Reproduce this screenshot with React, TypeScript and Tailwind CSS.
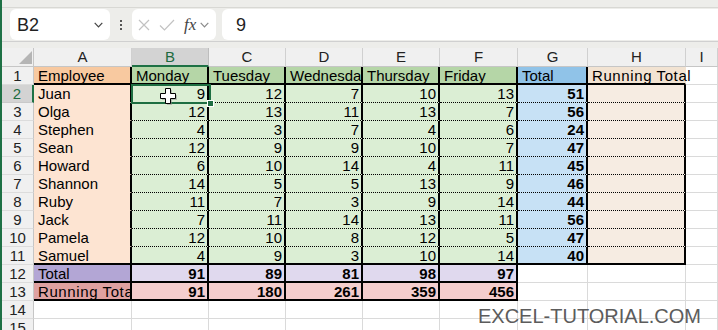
import React from "react";

const names = ["Juan", "Olga", "Stephen", "Sean", "Howard", "Shannon", "Ruby", "Jack", "Pamela", "Samuel"];
const data = [
  [9, 12, 7, 10, 13],
  [12, 13, 11, 13, 7],
  [4, 3, 7, 4, 6],
  [12, 9, 9, 10, 7],
  [6, 10, 14, 4, 11],
  [14, 5, 5, 13, 9],
  [11, 7, 3, 9, 14],
  [7, 11, 14, 13, 11],
  [12, 10, 8, 12, 5],
  [4, 9, 3, 10, 14],
];
const totals = [91, 89, 81, 98, 97];
const running = [91, 180, 261, 359, 456];
const headers = ["Employee", "Monday", "Tuesday", "Wednesday", "Thursday", "Friday", "Total", "Running Total"];
const letters = ["A", "B", "C", "D", "E", "F", "G", "H", "I"];

const widths = ["w-[98px]", "w-[77px]", "w-[77px]", "w-[77px]", "w-[77px]", "w-[78px]", "w-[70px]", "w-[98px]", "flex-1"];

const THICK_R = "border-r-2 border-r-black";
const GRID_R = "border-r border-r-[#dadada]";
const NONE_R = "border-r border-r-transparent";
const THICK_B = "border-b-2 border-b-black";
const GRID_B = "border-b border-b-[#dadada]";
const NONE_B = "border-b border-b-transparent";
const DOT_B = "border-b border-b-black [border-bottom-style:dotted]";

function bgFor(r: number, c: number): string {
  if (r === 1) {
    if (c === 0) return "bg-[#f8c9a0]";
    if (c >= 1 && c <= 5) return "bg-[#b5d6a7]";
    if (c === 6) return "bg-[#90c3e8]";
    if (c === 7) return "bg-[#f2e3d2]";
    return "";
  }
  if (r >= 2 && r <= 11) {
    if (c === 0) return "bg-[#fde4d2]";
    if (c >= 1 && c <= 5) return "bg-[#dbeed4]";
    if (c === 6) return "bg-[#c7e1f5]";
    if (c === 7) return "bg-[#f6ece2]";
    return "";
  }
  if (r === 12) {
    if (c === 0) return "bg-[#b3a6d5]";
    if (c >= 1 && c <= 5) return "bg-[#e0d9ee]";
    return "";
  }
  if (r === 13) {
    if (c === 0) return "bg-[#dfa1a1]";
    if (c >= 1 && c <= 5) return "bg-[#f4cdcd]";
    return "";
  }
  return "";
}

function rightFor(r: number, c: number): string {
  if (c <= 5 && r <= 13) return THICK_R;
  if (c === 6 && r <= 11) return THICK_R;
  if (c === 7 && r >= 2 && r <= 11) return THICK_R;
  if (c === 7 && r === 1) return NONE_R;
  return GRID_R;
}

function bottomFor(r: number, c: number): string {
  if (c === 8) return GRID_B;
  if (r === 1) return THICK_B;
  if (r >= 2 && r <= 10) return c === 0 ? NONE_B : DOT_B;
  if (r === 11) return THICK_B;
  if (r === 12 || r === 13) return c <= 5 ? THICK_B : GRID_B;
  return GRID_B;
}

function content(r: number, c: number): { text: string; num: boolean; bold: boolean } {
  if (r === 1 && c <= 7) return { text: headers[c], num: false, bold: false };
  if (r >= 2 && r <= 11) {
    const i = r - 2;
    if (c === 0) return { text: names[i], num: false, bold: false };
    if (c >= 1 && c <= 5) return { text: String(data[i][c - 1]), num: true, bold: false };
    if (c === 6) return { text: String(data[i].reduce((a, b) => a + b, 0)), num: true, bold: true };
  }
  if (r === 12) {
    if (c === 0) return { text: "Total", num: false, bold: false };
    if (c >= 1 && c <= 5) return { text: String(totals[c - 1]), num: true, bold: true };
  }
  if (r === 13) {
    if (c === 0) return { text: "Running Total", num: false, bold: false };
    if (c >= 1 && c <= 5) return { text: String(running[c - 1]), num: true, bold: true };
  }
  return { text: "", num: false, bold: false };
}

function Cell({ r, c }: { r: number; c: number }) {
  const { text, num, bold } = content(r, c);
  const overflow = r === 1 && c === 7 ? "overflow-visible" : "overflow-hidden";
  const align = num ? "text-right pr-[2px]" : "text-left pl-[4px]";
  const weight = bold ? "font-bold" : "font-normal";
  const track = text === "Running Total" ? "tracking-[0.6px]" : "tracking-normal";
  return (
    <div
      className={`${widths[c]} shrink-0 h-full whitespace-nowrap leading-[17px] text-[15px] text-black ${track} ${overflow} ${align} ${weight} ${bgFor(r, c)} ${rightFor(r, c)} ${bottomFor(r, c)}`}
    >
      {text}
    </div>
  );
}

function Row({ r }: { r: number }) {
  const selected = r === 2;
  return (
    <div className="flex h-[18px] shrink-0">
      <div
        className={
          selected
            ? "w-[32px] shrink-0 h-full bg-[#d3d3d3] text-[#1d6b40] border-r-2 border-r-[#1e7145] border-b border-b-[#c9c9c9] text-center text-[15px] leading-[17px]"
            : "w-[32px] shrink-0 h-full bg-[#f0f0f0] text-[#222] border-r border-r-[#c6c6c6] border-b border-b-[#dcdcdc] text-center text-[15px] leading-[17px]"
        }
      >
        {r}
      </div>
      {letters.map((_, c) => (
        <Cell key={c} r={r} c={c} />
      ))}
    </div>
  );
}

function Chevron({ color }: { color: string }) {
  return (
    <svg width="9" height="6" viewBox="0 0 9 6">
      <path d="M0.7 0.8 L4.5 4.8 L8.3 0.8" fill="none" stroke={color} strokeWidth="1.2" />
    </svg>
  );
}

export default function App() {
  const rows = Array.from({ length: 15 }, (_, i) => i + 1);
  return (
    <div className="relative w-[718px] h-[330px] overflow-hidden bg-white flex font-['Liberation_Sans',Arial,sans-serif]">
      <div className="w-[2px] shrink-0 bg-[#1e7145]" />
      <div className="flex-1 min-w-0 flex flex-col">
        {/* Toolbar / formula bar */}
        <div className="h-[48px] shrink-0 bg-[#ededea] flex flex-col">
          <div className="h-[8px] border-b border-b-[#d8d8d4]" />
          <div className="h-[33px] flex items-center">
            <div className="ml-[8px] w-[100px] h-[31px] rounded-[6px] bg-white flex items-center justify-between pl-[7px] pr-[7px]">
              <span className="text-[18px] text-[#222] leading-none">B2</span>
              <Chevron color="#444" />
            </div>
            <div className="w-[22px] h-[31px] flex flex-col items-center justify-center gap-[2px]">
              <div className="w-[2px] h-[2px] bg-[#555]" />
              <div className="w-[2px] h-[2px] bg-[#555]" />
              <div className="w-[2px] h-[2px] bg-[#555]" />
            </div>
            <div className="w-[84px] h-[31px] rounded-[6px] bg-white flex items-center pl-[6px]">
              <svg width="12" height="12" viewBox="0 0 12 12">
                <path d="M1 1 L11 11 M11 1 L1 11" stroke="#c2c2c2" strokeWidth="1.2" />
              </svg>
              <svg className="ml-[9px]" width="16" height="12" viewBox="0 0 16 12">
                <path d="M1 6.5 L5.5 11 L15 1" fill="none" stroke="#c2c2c2" strokeWidth="1.2" />
              </svg>
              <span className="ml-[9px] font-['Liberation_Serif',serif] italic text-[17px] text-[#444] leading-none">
                fx
              </span>
              <span className="ml-[4px] flex items-center">
                <Chevron color="#8a8a8a" />
              </span>
            </div>
            <div className="ml-[6px] flex-1 h-[31px] rounded-l-[6px] bg-white flex items-center pl-[14px]">
              <span className="text-[18px] text-[#222] leading-none">9</span>
            </div>
          </div>
          <div className="h-[7px] border-t border-t-[#d0d0d0]" />
        </div>

        {/* Column headers */}
        <div className="flex h-[19px] shrink-0 bg-[#f0f0f0]">
          <div className="w-[32px] shrink-0 h-full border-r border-r-[#c6c6c6] border-b border-b-[#c6c6c6] flex items-end justify-end pr-[1px] pb-[2px]">
            <svg width="13" height="13" viewBox="0 0 13 13">
              <path d="M13 0 L13 13 L0 13 Z" fill="#b5b5b5" />
            </svg>
          </div>
          {letters.map((l, c) => (
            <div
              key={l}
              className={
                c === 1
                  ? `${widths[c]} shrink-0 h-full bg-[#d3d3d3] text-[#1d6b40] border-r border-r-[#bdbdbd] border-b-2 border-b-[#1e7145] text-center text-[15px] leading-[18px]`
                  : `${widths[c]} shrink-0 h-full text-[#222] border-r border-r-[#d0d0d0] border-b border-b-[#c6c6c6] text-center text-[15px] leading-[18px]`
              }
            >
              {l}
            </div>
          ))}
        </div>

        {/* Grid rows */}
        {rows.map((r) => (
          <Row key={r} r={r} />
        ))}
      </div>

      {/* Selection box on B2 */}
      <div className="absolute left-[131px] top-[84px] w-[80px] h-[20px] border-2 border-[#1e6e42]" />
      <div className="absolute left-[207px] top-[100px] w-[7px] h-[7px] bg-[#1e6e42] border border-white" />

      {/* Mouse cursor */}
      <svg className="absolute left-[159px] top-[87px]" width="19" height="19" viewBox="0 0 19 19">
        <path d="M6.5 1.5 H11.5 V6.5 H16.5 V11.5 H11.5 V16.5 H6.5 V11.5 H1.5 V6.5 H6.5 Z" fill="#8a8a8a" opacity="0.5" transform="translate(1.5 1.5)" />
        <path d="M6.5 1.5 H11.5 V6.5 H16.5 V11.5 H11.5 V16.5 H6.5 V11.5 H1.5 V6.5 H6.5 Z" fill="white" stroke="black" strokeWidth="1" />
      </svg>

      {/* Watermark */}
      <div className="absolute left-[478px] top-[304px] text-[20px] leading-[24px] text-[#5c5c5c] whitespace-nowrap">
        EXCEL-TUTORIAL.COM
      </div>
    </div>
  );
}
